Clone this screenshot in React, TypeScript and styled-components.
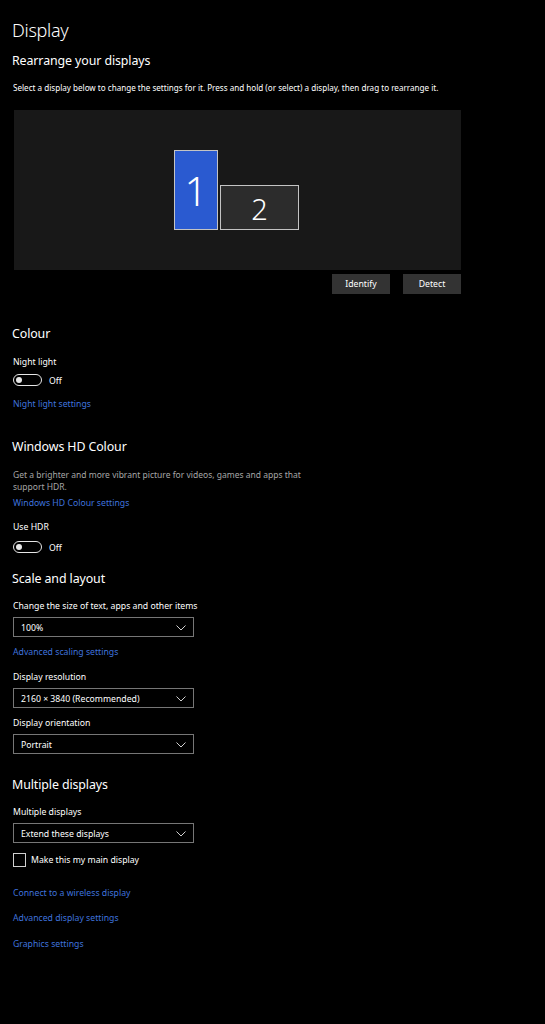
import React, { useState } from 'react';
import styled, { createGlobalStyle } from 'styled-components';

const GlobalStyle = createGlobalStyle`
    html, body {
        margin: 0;
        padding: 0;
        background: #000;
    }
    body {
        font-family: "Noto Sans", "Open Sans", sans-serif;
        color: #fff;
    }
`

const Chevron = () => (
    <svg width="10" height="6" viewBox="0 0 10 6">
        <polyline points="0.5,0.5 5,5 9.5,0.5" fill="none" stroke="#d0d0d0" strokeWidth="1" />
    </svg>
)

const Toggle = ({ on }: { on: boolean }) => (
    <StyledToggleRow>
        <StyledToggle $on={on}><span /></StyledToggle>
        <span>{on ? 'On' : 'Off'}</span>
    </StyledToggleRow>
)

const Select = ({ value, mt }: { value: string, mt: number }) => (
    <StyledSelect $mt={mt}>
        <span>{value}</span>
        <Chevron />
    </StyledSelect>
)

const App = () => {
    const [ main, setMain ] = useState(false)

    return (
        <StyledPage>
            <GlobalStyle />
            <StyledTitle>Display</StyledTitle>

            <StyledHeading $mt={10}>Rearrange your displays</StyledHeading>
            <StyledText $mt={11}>Select a display below to change the settings for it. Press and hold (or select) a display, then drag to rearrange it.</StyledText>
            <StyledArrange>
                <StyledMonitors>
                    <StyledMonitor $w={44} $h={80} $selected>
                        <StyledMonitorNum $size={40}>1</StyledMonitorNum>
                    </StyledMonitor>
                    <StyledMonitor $w={79} $h={45}>
                        <StyledMonitorNum $size={29}>2</StyledMonitorNum>
                    </StyledMonitor>
                </StyledMonitors>
            </StyledArrange>
            <StyledButtons>
                <StyledButton>Identify</StyledButton>
                <StyledButton>Detect</StyledButton>
            </StyledButtons>

            <StyledHeading $mt={31}>Colour</StyledHeading>
            <StyledLabel $mt={12}>Night light</StyledLabel>
            <StyledGap $h={5} />
            <Toggle on={false} />
            <StyledLink $mt={11}>Night light settings</StyledLink>

            <StyledHeading $mt={27}>Windows HD Colour</StyledHeading>
            <StyledDesc>Get a brighter and more vibrant picture for videos, games and apps that support HDR.</StyledDesc>
            <StyledLink $mt={3}>Windows HD Colour settings</StyledLink>
            <StyledLabel $mt={10}>Use HDR</StyledLabel>
            <StyledGap $h={7} />
            <Toggle on={false} />

            <StyledHeading $mt={17}>Scale and layout</StyledHeading>
            <StyledLabel $mt={11}>Change the size of text, apps and other items</StyledLabel>
            <Select value="100%" mt={4} />
            <StyledLink $mt={8}>Advanced scaling settings</StyledLink>
            <StyledLabel $mt={11}>Display resolution</StyledLabel>
            <Select value="2160 × 3840 (Recommended)" mt={4} />
            <StyledLabel $mt={8}>Display orientation</StyledLabel>
            <Select value="Portrait" mt={4} />

            <StyledHeading $mt={22}>Multiple displays</StyledHeading>
            <StyledLabel $mt={11}>Multiple displays</StyledLabel>
            <Select value="Extend these displays" mt={4} />
            <StyledCheckRow onClick={() => setMain(!main)}>
                <StyledCheckbox $checked={main} />
                <span>Make this my main display</span>
            </StyledCheckRow>

            <StyledLink $mt={19}>Connect to a wireless display</StyledLink>
            <StyledLink $mt={11}>Advanced display settings</StyledLink>
            <StyledLink $mt={12}>Graphics settings</StyledLink>
        </StyledPage>
    )
}

const StyledPage = styled.main`
    background: #000;
    min-height: 1024px;
    box-sizing: border-box;
    padding: 18px 0 0 12px;
    display: flex;
    flex-direction: column;
    align-items: flex-start;
`

const StyledTitle = styled.h1`
    margin: 0;
    font-size: 18px;
    line-height: 24px;
    font-weight: 300;
    letter-spacing: -0.3px;
    color: #fff;
`

const StyledHeading = styled.h2<{ $mt: number }>`
    margin: ${p => p.$mt}px 0 0;
    font-size: 12.4px;
    line-height: 18px;
    font-weight: 400;
    letter-spacing: -0.1px;
    color: #fff;
`

const StyledText = styled.p<{ $mt: number }>`
    margin: ${p => p.$mt}px 0 0 1px;
    font-size: 8.1px;
    line-height: 14px;
    color: #fff;
    white-space: nowrap;
`

const StyledLabel = styled.div<{ $mt: number }>`
    margin: ${p => p.$mt}px 0 0 1px;
    font-size: 8.7px;
    line-height: 14px;
    color: #fff;
`

const StyledDesc = styled.p`
    margin: 13px 0 0 1px;
    width: 295px;
    font-size: 8.5px;
    line-height: 12px;
    color: #a6a6a6;
`

const StyledLink = styled.a<{ $mt: number }>`
    margin: ${p => p.$mt}px 0 0 1px;
    font-size: 8.7px;
    line-height: 14px;
    color: #3f73dd;
    cursor: pointer;
`

const StyledGap = styled.div<{ $h: number }>`
    height: ${p => p.$h}px;
`

const StyledArrange = styled.div`
    margin: 15px 0 0 2px;
    width: 447px;
    height: 160px;
    background: #181818;
    box-sizing: border-box;
    padding: 40px 0 0 160px;
`

const StyledMonitors = styled.div`
    display: flex;
    align-items: flex-end;
    gap: 2px;
`

const StyledMonitor = styled.div<{ $w: number, $h: number, $selected?: boolean }>`
    width: ${p => p.$w}px;
    height: ${p => p.$h}px;
    box-sizing: border-box;
    border: 1.5px solid #c4c4c4;
    background: ${p => p.$selected ? '#2a5ad0' : '#2c2c2c'};
    display: flex;
    align-items: center;
    justify-content: center;
`

const StyledMonitorNum = styled.span<{ $size: number }>`
    font-size: ${p => p.$size}px;
    font-weight: 300;
    line-height: 1;
    color: #fff;
    margin-top: 2px;
`

const StyledButtons = styled.div`
    margin: 4px 0 0;
    width: 449px;
    display: flex;
    justify-content: flex-end;
    gap: 13px;
`

const StyledButton = styled.button`
    width: 58px;
    height: 20px;
    border: none;
    padding: 0;
    background: #333;
    color: #fff;
    font-family: inherit;
    font-size: 8.7px;
    cursor: pointer;
`

const StyledToggleRow = styled.div`
    margin-left: 1px;
    display: flex;
    align-items: center;
    gap: 7px;
    height: 12px;
    font-size: 8.7px;
    color: #fff;
    & > span {
        margin-top: 2px;
    }
`

const StyledToggle = styled.div<{ $on: boolean }>`
    width: 29px;
    height: 12px;
    box-sizing: border-box;
    border: 1.5px solid #e6e6e6;
    border-radius: 6px;
    display: flex;
    align-items: center;
    padding: 0 2px;
    span {
        width: 6px;
        height: 6px;
        border-radius: 50%;
        background: #e6e6e6;
    }
`

const StyledSelect = styled.div<{ $mt: number }>`
    margin: ${p => p.$mt}px 0 0 1px;
    width: 181px;
    height: 20px;
    box-sizing: border-box;
    border: 1.5px solid #767676;
    display: flex;
    align-items: center;
    justify-content: space-between;
    padding: 1px 7px 0 7px;
    font-size: 8.7px;
    color: #fff;
`

const StyledCheckRow = styled.label`
    margin: 10px 0 0 1px;
    display: flex;
    align-items: center;
    gap: 5px;
    font-size: 8.7px;
    color: #fff;
    cursor: pointer;
`

const StyledCheckbox = styled.span<{ $checked: boolean }>`
    width: 13px;
    height: 14px;
    box-sizing: border-box;
    border: 1.5px solid #cfcfcf;
    background: ${p => p.$checked ? '#3f73dd' : 'transparent'};
`

export default App
